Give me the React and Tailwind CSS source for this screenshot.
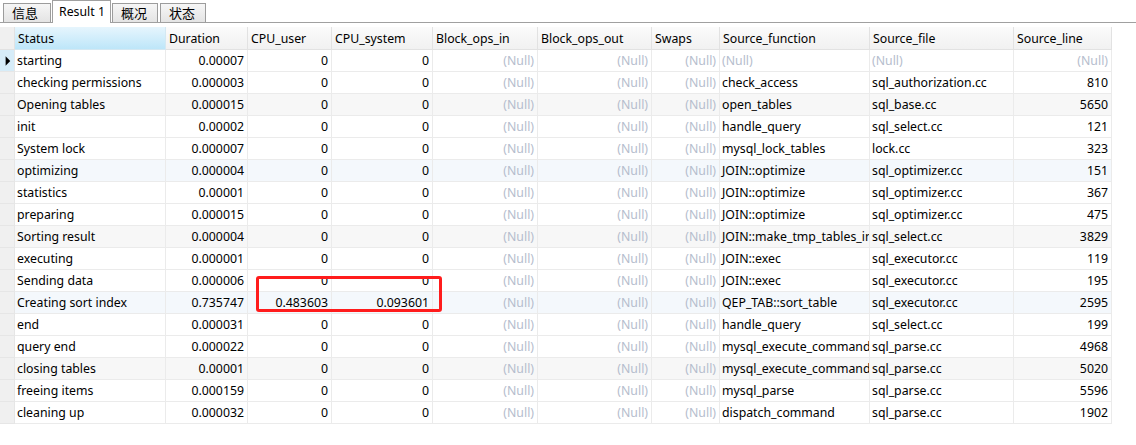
import React from 'react';

const columns = [
  { key: 'status', label: 'Status', align: 'left' },
  { key: 'duration', label: 'Duration', align: 'right' },
  { key: 'cpuUser', label: 'CPU_user', align: 'right' },
  { key: 'cpuSystem', label: 'CPU_system', align: 'right' },
  { key: 'blockIn', label: 'Block_ops_in', align: 'right' },
  { key: 'blockOut', label: 'Block_ops_out', align: 'right' },
  { key: 'swaps', label: 'Swaps', align: 'right' },
  { key: 'func', label: 'Source_function', align: 'left' },
  { key: 'file', label: 'Source_file', align: 'left' },
  { key: 'line', label: 'Source_line', align: 'right' },
];

const N = null;

const rows = [
  ['starting', '0.00007', '0', '0', N, N, N, N, N, N],
  ['checking permissions', '0.000003', '0', '0', N, N, N, 'check_access', 'sql_authorization.cc', '810'],
  ['Opening tables', '0.000015', '0', '0', N, N, N, 'open_tables', 'sql_base.cc', '5650'],
  ['init', '0.00002', '0', '0', N, N, N, 'handle_query', 'sql_select.cc', '121'],
  ['System lock', '0.000007', '0', '0', N, N, N, 'mysql_lock_tables', 'lock.cc', '323'],
  ['optimizing', '0.000004', '0', '0', N, N, N, 'JOIN::optimize', 'sql_optimizer.cc', '151'],
  ['statistics', '0.00001', '0', '0', N, N, N, 'JOIN::optimize', 'sql_optimizer.cc', '367'],
  ['preparing', '0.000015', '0', '0', N, N, N, 'JOIN::optimize', 'sql_optimizer.cc', '475'],
  ['Sorting result', '0.000004', '0', '0', N, N, N, 'JOIN::make_tmp_tables_info', 'sql_select.cc', '3829'],
  ['executing', '0.000001', '0', '0', N, N, N, 'JOIN::exec', 'sql_executor.cc', '119'],
  ['Sending data', '0.000006', '0', '0', N, N, N, 'JOIN::exec', 'sql_executor.cc', '195'],
  ['Creating sort index', '0.735747', '0.483603', '0.093601', N, N, N, 'QEP_TAB::sort_table', 'sql_executor.cc', '2595'],
  ['end', '0.000031', '0', '0', N, N, N, 'handle_query', 'sql_select.cc', '199'],
  ['query end', '0.000022', '0', '0', N, N, N, 'mysql_execute_command', 'sql_parse.cc', '4968'],
  ['closing tables', '0.00001', '0', '0', N, N, N, 'mysql_execute_command', 'sql_parse.cc', '5020'],
  ['freeing items', '0.000159', '0', '0', N, N, N, 'mysql_parse', 'sql_parse.cc', '5596'],
  ['cleaning up', '0.000032', '0', '0', N, N, N, 'dispatch_command', 'sql_parse.cc', '1902'],
];

const gridCols =
  'grid grid-cols-[15px_151px_82px_84px_101px_105px_114px_68px_150px_144px_98px]';

function rowBg(i) {
  if (i % 3 !== 2) return 'bg-white';
  return Math.floor(i / 3) % 2 === 0 ? 'bg-[#f7f7f7]' : 'bg-[#f4f8fc]';
}

function Tabs() {
  const inactive =
    'h-[20px] mt-[2px] border border-b-0 border-[#9c9c9c] bg-gradient-to-b from-[#f6f6f6] to-[#e3e3e3] pl-[8px] text-[13px] leading-[19px]';
  return (
    <div className="relative flex h-[23px] items-end gap-px pl-[3px] after:absolute after:bottom-0 after:left-0 after:right-0 after:h-px after:bg-[#a0a0a0]">
      <div className={`${inactive} w-[48px]`}>信息</div>
      <div className="relative z-10 h-[23px] w-[59px] border border-b-0 border-[#a0a0a0] bg-white pl-[6px] pt-[1px] text-[12.3px] leading-[19px]">
        Result 1
      </div>
      <div className={`${inactive} w-[46px] pl-[2px]`}>概况</div>
      <div className={`${inactive} ml-px w-[46px] pl-[7px]`}>状态</div>
    </div>
  );
}

export default function App() {
  return (
    <div
      className="relative h-[445px] w-[1136px] overflow-hidden bg-white text-[12.3px] text-black"
      style={{ fontFamily: '"Noto Sans", "Noto Sans CJK SC", sans-serif' }}
    >
      <Tabs />
      <div className="mt-[4px]">
        <div className={gridCols}>
          <div className="h-[23px] border-b border-r border-[#e2e2e2] bg-[#f0f0f0]" />
          {columns.map((c, i) => (
            <div
              key={c.key}
              className={`h-[23px] border-b border-r pl-[3px] leading-[23px] ${
                i === 0
                  ? 'border-[#d4e8f2] bg-gradient-to-b from-[#e6f5fd] to-[#bde6f9]'
                  : 'border-[#e2e2e2] bg-gradient-to-b from-[#fbfbfb] to-[#f1f1f1]'
              }`}
            >
              {c.label}
            </div>
          ))}
          {rows.map((r, ri) => (
            <React.Fragment key={ri}>
              <div
                className={`flex h-[22px] items-center border-b border-r border-[#e6e6e6] ${
                  ri === 0 ? 'bg-[#d6ecf8]' : 'bg-[#f0f0f0]'
                }`}
              >
                {ri === 0 && (
                  <svg width="15" height="22" viewBox="0 0 15 22">
                    <path d="M6 6 L11 11 L6 16 Z" fill="#000" />
                  </svg>
                )}
              </div>
              {r.map((v, ci) => (
                <div
                  key={ci}
                  className={`h-[22px] overflow-hidden whitespace-nowrap border-b border-r border-[#ebebeb] leading-[22px] ${rowBg(ri)} ${
                    columns[ci].align === 'right' ? 'pr-[3px] text-right' : 'pl-[2px]'
                  } ${v === null ? 'text-[#b5bdcd]' : ''}`}
                >
                  {v === null ? '(Null)' : v}
                </div>
              ))}
            </React.Fragment>
          ))}
        </div>
      </div>
      <div className="pointer-events-none absolute left-[256px] top-[276px] h-[36px] w-[186px] rounded-[3px] border-[3px] border-[#ff1c1c]" />
    </div>
  );
}
